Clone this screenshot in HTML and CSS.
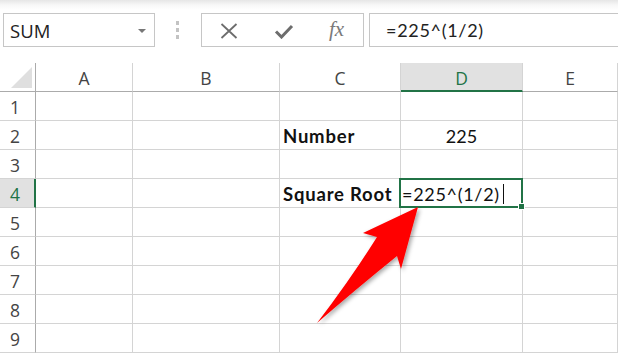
FILE: index.html
```html
<!DOCTYPE html>
<html>
<head>
<meta charset="utf-8">
<link rel="stylesheet" href="styles.css">
</head>
<body>
<div class="app">
  <div class="topbar">
    <div class="namebox">
      <span class="name">SUM</span>
      <span class="caret"></span>
    </div>
    <div class="grip"><i></i><i></i><i></i></div>
    <div class="fbtns">
      <svg class="ico" width="20" height="16" viewBox="0 0 20 16"><path d="M2.5 1 L17.5 15 M17.5 1 L2.5 15" stroke="#6d6d6d" stroke-width="1.8" fill="none"/></svg>
      <svg class="ico" width="20" height="16" viewBox="0 0 20 16"><path d="M2 8.5 L7.5 14 L18 3" stroke="#6d6d6d" stroke-width="3" fill="none" stroke-linejoin="miter"/></svg>
      <span class="fx">fx</span>
    </div>
    <div class="finput">=225^(1/2)</div>
  </div>
  <div class="sheet">
    <div class="hd corner"><span class="tri"></span></div>
    <div class="hd col">A</div>
    <div class="hd col">B</div>
    <div class="hd col">C</div>
    <div class="hd col sel">D</div>
    <div class="hd col">E</div>
    <div class="hd col last"></div>

    <div class="hd row">1</div><div class="c"></div><div class="c"></div><div class="c"></div><div class="c"></div><div class="c"></div><div class="c last"></div>
    <div class="hd row">2</div><div class="c"></div><div class="c"></div><div class="c b">Number</div><div class="c num">225</div><div class="c"></div><div class="c last"></div>
    <div class="hd row">3</div><div class="c"></div><div class="c"></div><div class="c"></div><div class="c"></div><div class="c"></div><div class="c last"></div>
    <div class="hd row sel">4</div><div class="c"></div><div class="c"></div><div class="c b">Square Root</div><div class="c active"><span class="formula">=225^(1/2)</span><span class="cursor"></span><span class="handle"></span></div><div class="c"></div><div class="c last"></div>
    <div class="hd row">5</div><div class="c"></div><div class="c"></div><div class="c"></div><div class="c"></div><div class="c"></div><div class="c last"></div>
    <div class="hd row">6</div><div class="c"></div><div class="c"></div><div class="c"></div><div class="c"></div><div class="c"></div><div class="c last"></div>
    <div class="hd row">7</div><div class="c"></div><div class="c"></div><div class="c"></div><div class="c"></div><div class="c"></div><div class="c last"></div>
    <div class="hd row">8</div><div class="c"></div><div class="c"></div><div class="c"></div><div class="c"></div><div class="c"></div><div class="c last"></div>
    <div class="hd row">9</div><div class="c"></div><div class="c"></div><div class="c"></div><div class="c"></div><div class="c"></div><div class="c last"></div>
  </div>
  <svg class="arrow" width="618" height="354" viewBox="0 0 618 354">
    <defs>
      <filter id="sh" x="-20%" y="-20%" width="140%" height="140%">
        <feDropShadow dx="2" dy="2" stdDeviation="2" flood-color="#000" flood-opacity="0.35"/>
      </filter>
    </defs>
    <path d="M317 323 Q350 280 377 237 L363 233 L418 207 L401 269 L397 256 Q355 290 317 323 Z" fill="#ff0000" filter="url(#sh)"/>
  </svg>
</div>
</body>
</html>
```

FILE: styles.css
```css
html, body {
  margin: 0;
  padding: 0;
  background: #ffffff;
}
.app {
  position: relative;
  width: 618px;
  height: 354px;
  overflow: hidden;
  background: linear-gradient(#e6e6e6 0px, #f7f7f7 5px, #ffffff 10px, #ffffff 100%);
}
.topbar {
  display: flex;
  align-items: stretch;
  height: 34px;
  padding-top: 13px;
  padding-bottom: 16px;
}
.namebox {
  margin-left: 3px;
  width: 152px;
  border: 1px solid #c6c6c6;
  background: #fff;
  display: flex;
  align-items: center;
  justify-content: space-between;
  padding: 0 8px 0 6px;
  box-sizing: border-box;
}
.name {
  font-family: "Open Sans", "Noto Sans", sans-serif;
  font-size: 18.5px;
  color: #222;
  margin-top: 1px;
}
.caret {
  width: 0;
  height: 0;
  border-left: 4px solid transparent;
  border-right: 4px solid transparent;
  border-top: 4px solid #777;
  margin-top: 2px;
}
.grip {
  width: 44px;
  display: flex;
  flex-direction: column;
  align-items: center;
  justify-content: center;
  gap: 3px;
}
.grip i {
  display: block;
  width: 3px;
  height: 4px;
  background: #c3c3c3;
}
.fbtns {
  margin-left: 2px;
  width: 163px;
  box-sizing: border-box;
  border: 1px solid #c6c6c6;
  background: #fff;
  display: flex;
  align-items: center;
  padding-left: 17px;
  padding-top: 2px;
  gap: 35px;
}
.fx {
  font-family: "Liberation Serif", serif;
  font-style: italic;
  font-size: 21px;
  color: #7a7a7a;
  margin-left: 0px;
  margin-top: -3px;
}
.finput {
  margin-left: 5px;
  flex: 1;
  border: 1px solid #c6c6c6;
  border-right: none;
  background: #fff;
  font-family: "Lato", "Liberation Sans", sans-serif;
  font-size: 18px;
  letter-spacing: 0.7px;
  color: #222;
  display: flex;
  align-items: center;
  padding-left: 16px;
}
.sheet {
  display: grid;
  grid-template-columns: 36px 97px 147px 121px 122px 95px 20px;
  grid-template-rows: 29px repeat(9, 29px);
}
.hd {
  font-family: "Open Sans", "Noto Sans", sans-serif;
  font-size: 17.5px;
  color: #444;
  display: flex;
  align-items: center;
  justify-content: center;
  box-sizing: border-box;
  background: #fff;
}
.hd.col {
  border-right: 1px solid #d4d4d4;
  border-bottom: 1px solid #ababab;
  padding-top: 1px;
}
.hd.corner {
  border-right: 1px solid #ababab;
  border-bottom: 1px solid #ababab;
  position: relative;
}
.tri {
  position: absolute;
  right: 3px;
  bottom: 3px;
  width: 0;
  height: 0;
  border-left: 21px solid transparent;
  border-bottom: 21px solid #dfdfdf;
}
.hd.row {
  border-right: 1px solid #ababab;
  border-bottom: 1px solid #d4d4d4;
  justify-content: flex-start;
  padding-left: 10px;
  padding-top: 2px;
}
.hd.col.sel {
  background: #e1e1e1;
  border-bottom: 2px solid #217346;
  color: #217346;
  padding-top: 2px;
}
.hd.row.sel {
  background: #e1e1e1;
  border-right: 2px solid #217346;
  color: #217346;
}
.c {
  box-sizing: border-box;
  border-right: 1px solid #d4d4d4;
  border-bottom: 1px solid #d4d4d4;
  font-family: "Lato", "Liberation Sans", sans-serif;
  font-size: 18px;
  color: #111;
  display: flex;
  align-items: center;
  white-space: nowrap;
  padding-top: 2px;
}
.c.last {
  border-right: none;
}
.c.b {
  font-weight: bold;
  padding-left: 3px;
  font-size: 18.5px;
  letter-spacing: 0.8px;
}
.c.num {
  justify-content: center;
}
.c.active {
  position: relative;
  padding-left: 1px;
  letter-spacing: 0.7px;
}
.c.active::after {
  content: "";
  position: absolute;
  left: -2px;
  top: -1px;
  right: -1px;
  bottom: -1px;
  border: 2px solid #217346;
}
.cursor {
  display: inline-block;
  width: 1px;
  height: 20px;
  background: #111;
  margin-left: 3px;
}
.handle {
  position: absolute;
  right: -3px;
  bottom: -3px;
  width: 5px;
  height: 5px;
  background: #217346;
  border: 1px solid #fff;
  z-index: 2;
}
.arrow {
  position: absolute;
  left: 0;
  top: 0;
  pointer-events: none;
}
```
